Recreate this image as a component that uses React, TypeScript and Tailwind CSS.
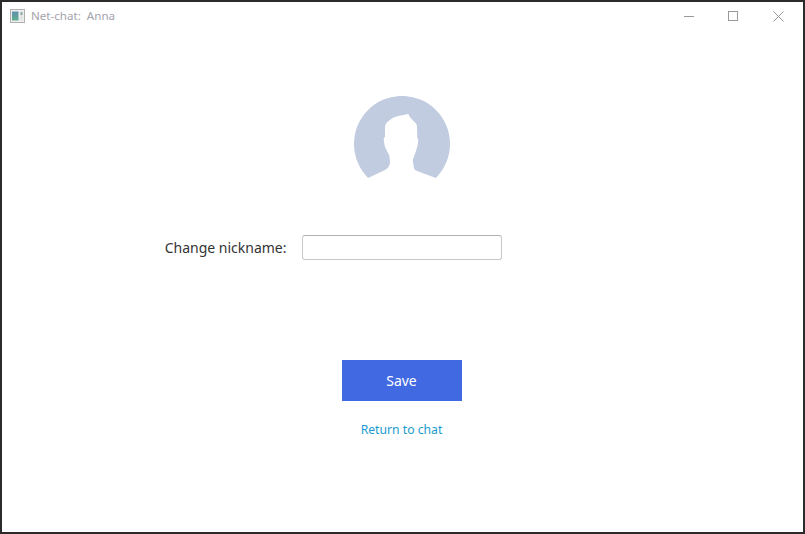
export default function App() {
  return (
    <div className="w-[805px] h-[534px] bg-white border-2 border-[#2b2b2b] flex flex-col font-['Noto_Sans',sans-serif] overflow-hidden">
      {/* title bar */}
      <div className="h-[28px] flex items-center justify-between shrink-0">
        <div className="flex items-center pl-[8px] gap-[6px]">
          <svg width="15" height="14" viewBox="0 0 15 14">
            <defs>
              <linearGradient id="ic" x1="0" y1="0" x2="0" y2="1">
                <stop offset="0" stopColor="#5f8fb0" />
                <stop offset="1" stopColor="#5fae8e" />
              </linearGradient>
            </defs>
            <rect x="0.5" y="0.5" width="14" height="13" fill="#efefef" stroke="#b0b0b0" />
            <rect x="2" y="2.5" width="6.5" height="9" fill="url(#ic)" />
            <rect x="10" y="2.5" width="3" height="9" fill="#dfe8e6" />
            <rect x="10.5" y="3" width="2" height="3" fill="#8fa8a8" />
          </svg>
          <span className="text-[11.6px] text-[#a3a3ad] whitespace-pre">Net-chat:  Anna</span>
        </div>
        <div className="flex items-center pr-[2px]">
          <button className="w-[45px] h-[28px] flex items-center justify-center">
            <span className="block w-[10px] h-px bg-[#999999]" />
          </button>
          <button className="w-[45px] h-[28px] flex items-center justify-center pr-[1px]">
            <span className="block w-[10px] h-[10px] border border-[#999999]" />
          </button>
          <button className="w-[45px] h-[28px] flex items-center justify-center">
            <svg width="11" height="11" viewBox="0 0 11 11" stroke="#999999" strokeWidth="1">
              <path d="M0.5 0.5L10.5 10.5M10.5 0.5L0.5 10.5" />
            </svg>
          </button>
        </div>
      </div>

      {/* body */}
      <div className="flex flex-col items-center pt-[66px] pr-[2px]">
        <svg width="96" height="96" viewBox="0 0 96 96" className="block">
          <path
            fill="#c2cce0"
            d="M14.1 81.9A48 48 0 1 1 81.9 81.9L63 75Q60 74 60 72L58.7 64Q61.5 57 63.5 50L64.3 44L63.3 42L63 30Q62.5 27 60 25.5L56 21.3L54.3 18C48 19.5 40 20 36 24Q31 27 31 31L31 41L29.7 42.3Q30 47 31 51L35.5 60L36 67Q35 72 31 74Z"
          />
        </svg>

        <div className="grid grid-cols-[1fr_200px_1fr] items-center w-full mt-[43px]">
          <label className="text-[14px] text-[#333333] text-right pr-[15px]">Change nickname:</label>
          <input className="w-[200px] h-[25px] bg-white border border-[#c8c8c8] border-t-[#b0b0b0] rounded-[3px] outline-none" />
        </div>

        <button className="w-[120px] h-[41px] mt-[100px] bg-[#4169e1] text-white text-[14px]">Save</button>
        <a className="mt-[20px] text-[12.2px] text-[#1a9bd0]">Return to chat</a>
      </div>
    </div>
  );
}
